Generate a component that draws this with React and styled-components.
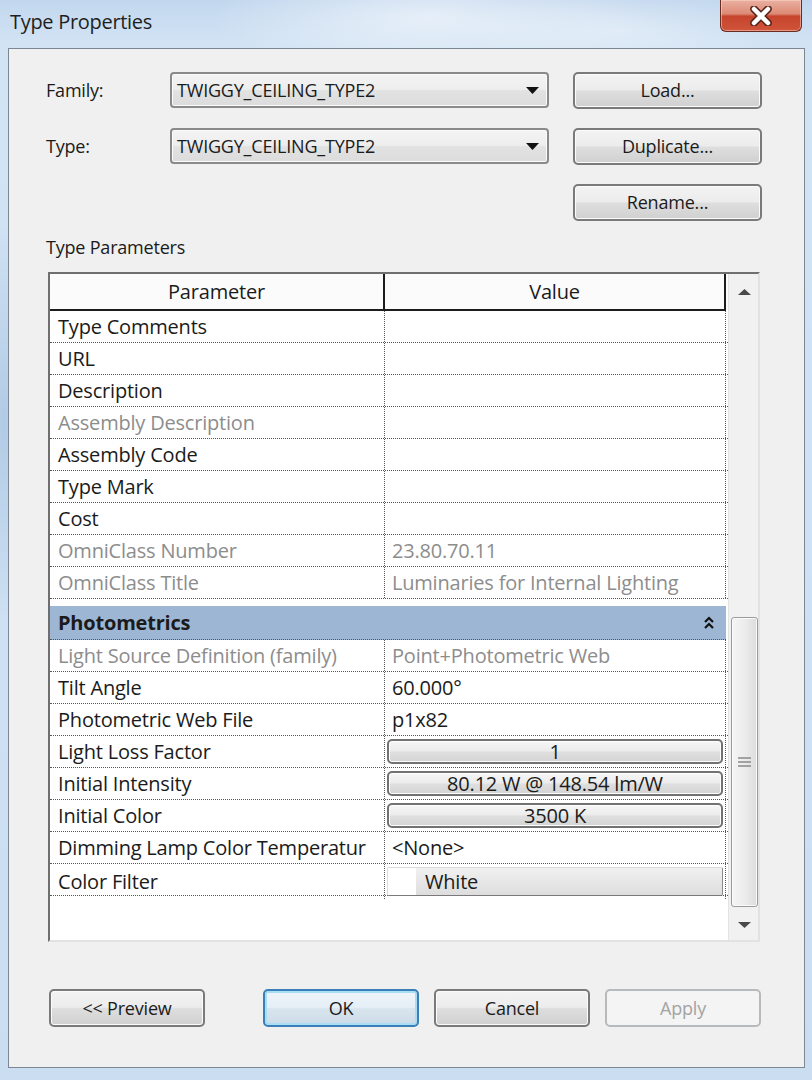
import React from "react";
import styled, { createGlobalStyle, css } from "styled-components";

const GlobalStyle = createGlobalStyle`
  html, body {
    margin: 0;
    padding: 0;
  }
  body {
    font-family: "Open Sans", "Noto Sans", sans-serif;
    color: #1b1b1b;
  }
`;

const Frame = styled.div`
  width: 812px;
  height: 1080px;
  box-sizing: border-box;
  display: flex;
  flex-direction: column;
  padding: 0 7px 12px 8px;
  background:
    radial-gradient(ellipse 220px 50px at 430px 18px, rgba(255, 255, 255, 0.55), transparent),
    radial-gradient(ellipse 160px 40px at 620px 30px, rgba(255, 255, 255, 0.35), transparent),
    radial-gradient(ellipse 30px 200px at 4px 420px, rgba(120, 160, 200, 0.35), transparent),
    linear-gradient(180deg, #c2d7ee 0%, #d2e3f4 4%, #cbdef1 100%);
`;

const TitleBar = styled.div`
  height: 48px;
  display: flex;
  justify-content: space-between;
  align-items: flex-start;
  flex-shrink: 0;
`;

const Title = styled.div`
  margin: 10px 0 0 2px;
  font-size: 20px;
  line-height: 24px;
  letter-spacing: -0.3px;
  color: #1e1e1e;
`;

const CloseButton = styled.div`
  width: 82px;
  height: 32px;
  margin-right: 3px;
  box-sizing: border-box;
  border: 1px solid #6a2b20;
  border-top: none;
  border-radius: 0 0 6px 6px;
  background: linear-gradient(180deg, #eab0a2 0%, #dc8a74 45%, #c6442c 52%, #cf553a 100%);
  box-shadow: inset 0 0 0 1px rgba(255, 220, 210, 0.5);
  display: flex;
  align-items: center;
  justify-content: center;
`;

const Client = styled.div`
  flex: 1;
  display: flex;
  flex-direction: column;
  border: 1px solid #7b8794;
  background: #f0f0f0;
  box-sizing: border-box;
`;

const TopGrid = styled.div`
  display: grid;
  grid-template-columns: 100px 379px 189px;
  grid-template-rows: repeat(3, 38px);
  column-gap: 24px;
  row-gap: 18px;
  padding: 22px 0 0 37px;
  align-items: center;
  font-size: 18px;
`;

const FieldLabel = styled.div`
  font-size: 18px;
  letter-spacing: -0.2px;
`;

const winButton = css`
  box-sizing: border-box;
  border: 2px solid #7a7a7a;
  border-radius: 5px;
  background: linear-gradient(180deg, #f3f3f3 0%, #ececec 48%, #dedede 52%, #d0d0d0 100%);
  box-shadow: inset 0 0 0 1px #fbfbfb;
  font-family: inherit;
  font-size: 18px;
  color: #1b1b1b;
`;

const Combo = styled.div`
  ${winButton};
  height: 36px;
  border-color: #8a8a8a;
  border-radius: 4px;
  background: linear-gradient(180deg, #f4f4f4 0%, #ededed 48%, #e2e2e2 52%, #dcdcdc 100%);
  display: flex;
  align-items: center;
  justify-content: space-between;
  padding: 0 8px 0 5px;
  letter-spacing: -0.2px;
`;

const Button = styled.div`
  ${winButton};
  height: ${(p) => p.$h || 37}px;
  width: ${(p) => (p.$w ? p.$w + "px" : "auto")};
  display: flex;
  align-items: center;
  justify-content: center;
  letter-spacing: -0.2px;
  ${(p) =>
    p.$focus &&
    css`
      border-color: #3a7fb5;
      box-shadow: inset 0 0 0 2px #a9dcf5;
      background: linear-gradient(180deg, #eef5fa 0%, #e6eff6 48%, #d8e5ee 52%, #cbdbe6 100%);
    `}
  ${(p) =>
    p.$disabled &&
    css`
      border-color: #b7babc;
      background: #f4f4f4;
      box-shadow: none;
      color: #a3a3a3;
    `}
`;

const SectionLabel = styled.div`
  margin: 16px 0 0 37px;
  font-size: 18px;
  line-height: 20px;
  letter-spacing: -0.2px;
`;

const Table = styled.div`
  margin: 15px 0 0 39px;
  width: 712px;
  height: 670px;
  box-sizing: border-box;
  border: 2px solid;
  border-color: #6f6f6f #e2e2e2 #e2e2e2 #6f6f6f;
  background: #fff;
  display: flex;
`;

const Content = styled.div`
  width: 678px;
  font-size: 20px;
  letter-spacing: -0.2px;
`;

const cols = css`
  display: grid;
  grid-template-columns: 335px 341px;
`;

const Header = styled.div`
  ${cols};
  height: 37px;
  background: #fbfbfb;
`;

const HeadCell = styled.div`
  box-sizing: border-box;
  border-bottom: 2px solid #1c1c1c;
  border-right: 2px solid #1c1c1c;
  display: flex;
  align-items: center;
  justify-content: center;
`;

const Row = styled.div`
  ${cols};
  height: 32px;
  box-sizing: border-box;
  border-bottom: 1px dotted #555;
  color: ${(p) => (p.$dim ? "#8d8d8d" : "#1b1b1b")};
`;

const NameCell = styled.div`
  box-sizing: border-box;
  border-right: 1px dotted #555;
  padding-left: 8px;
  display: flex;
  align-items: center;
  white-space: nowrap;
  overflow: hidden;
`;

const ValueCell = styled.div`
  box-sizing: border-box;
  border-right: 1px dotted #555;
  padding: ${(p) => (p.$boxed ? "3px 2px 3px 2px" : "0 0 0 7px")};
  display: flex;
  align-items: center;
  white-space: nowrap;
`;

const ValueButton = styled.div`
  box-sizing: border-box;
  flex: 1;
  height: 100%;
  border: 2px solid #727272;
  border-radius: 5px;
  background: linear-gradient(180deg, #f6f6f6 0%, #ececec 48%, #dfdfdf 52%, #d4d4d4 100%);
  box-shadow: inset 0 0 0 1px #fdfdfd;
  display: flex;
  align-items: center;
  justify-content: center;
  line-height: 1;
`;

const ColorButton = styled.div`
  box-sizing: border-box;
  flex: 1;
  height: 100%;
  border: 1px solid;
  border-color: #dadada #8a8a8a #7a7a7a #dadada;
  border-radius: 2px;
  background: linear-gradient(180deg, #f1f1f1 0%, #e7e7e7 50%, #dddddd 100%);
  display: flex;
  align-items: center;
`;

const Swatch = styled.div`
  width: 28px;
  height: 100%;
  background: #fff;
`;

const SwatchLabel = styled.span`
  padding-left: 9px;
`;

const GroupBar = styled.div`
  margin-top: 7px;
  width: 676px;
  height: 34px;
  box-sizing: border-box;
  background: #9cb6d4;
  display: flex;
  align-items: center;
  justify-content: space-between;
  padding: 0 12px 0 8px;
  font-weight: 700;
  border-bottom: 1px dotted #555;
`;

const Scrollbar = styled.div`
  width: 30px;
  box-sizing: border-box;
  padding-left: 2px;
  display: flex;
  flex-direction: column;
  background: #f1f1f1;
  border-left: 1px solid #e4e4e4;
`;

const Arrow = styled.div`
  height: ${(p) => p.$h}px;
  display: flex;
  justify-content: center;
  align-items: center;
`;

const Track = styled.div`
  flex: 1;
  padding-top: 307px;
`;

const Thumb = styled.div`
  height: 290px;
  box-sizing: border-box;
  border: 1px solid #9b9b9b;
  border-radius: 3px;
  background: linear-gradient(90deg, #f5f5f5 0%, #ececec 50%, #dcdcdc 100%);
  box-shadow: inset 0 0 0 1px #fafafa;
  display: flex;
  align-items: center;
  justify-content: center;
`;

const Footer = styled.div`
  display: flex;
  margin: 47px 0 0 40px;
  gap: 15px;
`;

const Spacer = styled.div`
  width: 28px;
`;

const params = [
  { name: "Type Comments" },
  { name: "URL" },
  { name: "Description" },
  { name: "Assembly Description", dim: true },
  { name: "Assembly Code" },
  { name: "Type Mark" },
  { name: "Cost" },
  { name: "OmniClass Number", value: "23.80.70.11", dim: true },
  { name: "OmniClass Title", value: "Luminaries for Internal Lighting", dim: true },
];

const photometrics = [
  { name: "Light Source Definition (family)", value: "Point+Photometric Web", dim: true },
  { name: "Tilt Angle", value: "60.000°" },
  { name: "Photometric Web File", value: "p1x82" },
  { name: "Light Loss Factor", value: "1", kind: "button" },
  { name: "Initial Intensity", value: "80.12 W @ 148.54 lm/W", kind: "button" },
  { name: "Initial Color", value: "3500 K", kind: "button" },
  { name: "Dimming Lamp Color Temperatur", value: "<None>" },
  { name: "Color Filter", value: "White", kind: "color" },
];

const DropArrow = () => (
  <svg width="13" height="7" viewBox="0 0 13 7">
    <path d="M0 0 H13 L6.5 7 Z" fill="#111" />
  </svg>
);

const CloseGlyph = () => (
  <svg width="24" height="20" viewBox="0 0 24 20">
    <path d="M5 3 L19 17 M19 3 L5 17" stroke="#5a2418" strokeWidth="7.5" strokeLinecap="round" />
    <path d="M5 3 L19 17 M19 3 L5 17" stroke="#fff" strokeWidth="4.5" strokeLinecap="round" />
  </svg>
);

const CollapseIcon = () => (
  <svg width="10" height="14" viewBox="0 0 10 14">
    <path d="M1 6 L5 2 L9 6 M1 12 L5 8 L9 12" stroke="#111" strokeWidth="2.2" fill="none" />
  </svg>
);

const ScrollTriangle = ({ up }) => (
  <svg width="13" height="6" viewBox="0 0 13 6">
    <path d={up ? "M0 6 H13 L6.5 0 Z" : "M0 0 H13 L6.5 6 Z"} fill="#4a4a4a" />
  </svg>
);

const Grip = () => (
  <svg width="13" height="10" viewBox="0 0 13 10">
    <path d="M0 1 H13 M0 5 H13 M0 9 H13" stroke="#8a8a8a" strokeWidth="1.4" />
  </svg>
);

function renderValue(p) {
  if (p.kind === "button") {
    return (
      <ValueCell $boxed>
        <ValueButton>{p.value}</ValueButton>
      </ValueCell>
    );
  }
  if (p.kind === "color") {
    return (
      <ValueCell $boxed>
        <ColorButton>
          <Swatch />
          <SwatchLabel>{p.value}</SwatchLabel>
        </ColorButton>
      </ValueCell>
    );
  }
  return <ValueCell>{p.value}</ValueCell>;
}

export default function App() {
  return (
    <Frame>
      <GlobalStyle />
      <TitleBar>
        <Title>Type Properties</Title>
        <CloseButton>
          <CloseGlyph />
        </CloseButton>
      </TitleBar>

      <Client>
        <TopGrid>
          <FieldLabel>Family:</FieldLabel>
          <Combo>
            TWIGGY_CEILING_TYPE2
            <DropArrow />
          </Combo>
          <Button>Load...</Button>

          <FieldLabel>Type:</FieldLabel>
          <Combo>
            TWIGGY_CEILING_TYPE2
            <DropArrow />
          </Combo>
          <Button>Duplicate...</Button>

          <div />
          <div />
          <Button>Rename...</Button>
        </TopGrid>

        <SectionLabel>Type Parameters</SectionLabel>

        <Table>
          <Content>
            <Header>
              <HeadCell>Parameter</HeadCell>
              <HeadCell>Value</HeadCell>
            </Header>
            {params.map((p) => (
              <Row key={p.name} $dim={p.dim}>
                <NameCell>{p.name}</NameCell>
                {renderValue(p)}
              </Row>
            ))}
            <GroupBar>
              Photometrics
              <CollapseIcon />
            </GroupBar>
            {photometrics.map((p) => (
              <Row key={p.name} $dim={p.dim}>
                <NameCell>{p.name}</NameCell>
                {renderValue(p)}
              </Row>
            ))}
          </Content>
          <Scrollbar>
            <Arrow $h={36}>
              <ScrollTriangle up />
            </Arrow>
            <Track>
              <Thumb>
                <Grip />
              </Thumb>
            </Track>
            <Arrow $h={30}>
              <ScrollTriangle />
            </Arrow>
          </Scrollbar>
        </Table>

        <Footer>
          <Button $w={156} $h={38}>&lt;&lt; Preview</Button>
          <Spacer />
          <Button $w={156} $h={38} $focus>OK</Button>
          <Button $w={156} $h={38}>Cancel</Button>
          <Button $w={156} $h={38} $disabled>Apply</Button>
        </Footer>
      </Client>
    </Frame>
  );
}
